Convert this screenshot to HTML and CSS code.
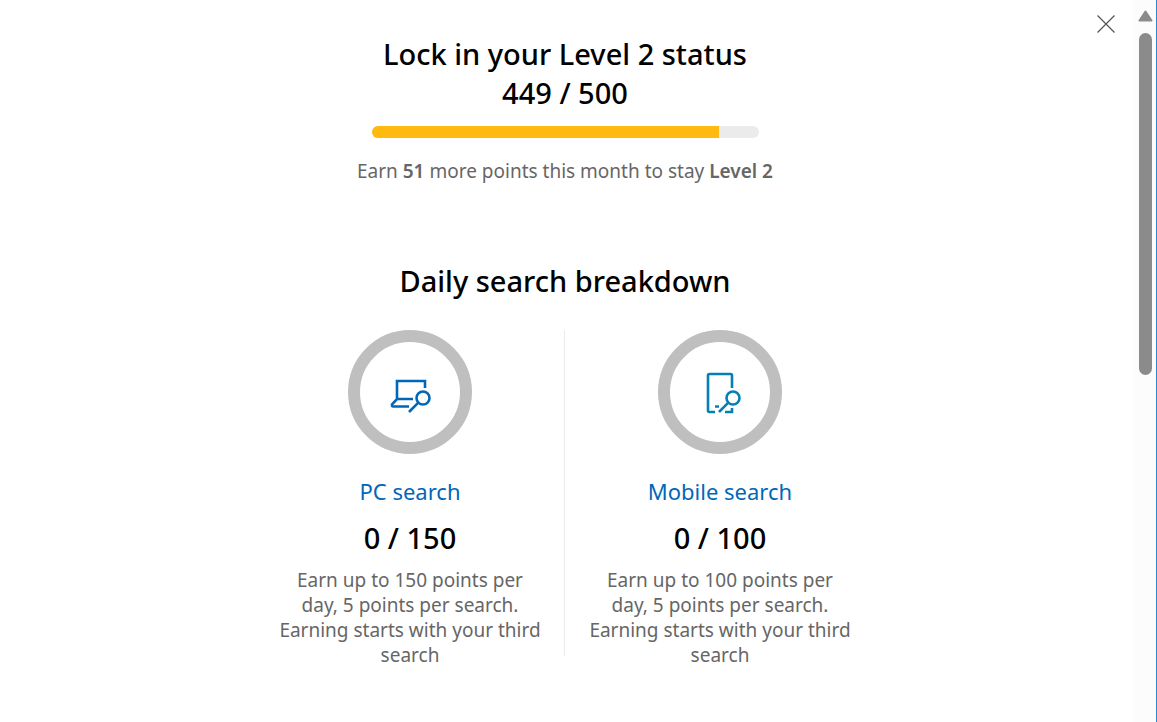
FILE: index.html
```html
<!DOCTYPE html>
<html lang="en">
<head>
  <meta charset="UTF-8">
  <meta name="viewport" content="width=device-width, initial-scale=1.0">
  <title>Points breakdown</title>
  <link rel="stylesheet" href="styles.css">
</head>
<body>
  <main class="dialog">
    <button class="close-btn" type="button" aria-label="Close">
      <svg width="18" height="18" viewBox="0 0 18 18" aria-hidden="true">
        <path d="M.5 .5l17 17M17.5 .5l-17 17"/>
      </svg>
    </button>

    <section class="level">
      <h1>Lock in your Level 2 status</h1>
      <p class="level-points">449 / 500</p>
      <div class="progress" role="progressbar" aria-label="Level 2 points" aria-valuenow="449" aria-valuemin="0" aria-valuemax="500">
        <div class="progress-fill" style="width: 89.8%"></div>
      </div>
      <p class="level-note">Earn <b>51</b> more points this month to stay <b>Level 2</b></p>
    </section>

    <section class="breakdown">
      <h2>Daily search breakdown</h2>
      <div class="cards">
        <div class="card">
          <div class="ring">
            <svg class="icon-pc" width="48" height="48" viewBox="0 0 48 48" aria-hidden="true">
              <path d="M39 20v-7H11v18M27 31H11l-4.500 4.800c-1.200 1.400-.5 2.700 1 2.700H23"/>
              <circle cx="37" cy="30" r="6.500"/>
              <path d="M32.300 34.700L23 44"/>
            </svg>
          </div>
          <a href="#">PC search</a>
          <p class="points">0 / 150</p>
          <p class="details">Earn up to 150 points per day, 5 points per search. Earning starts with your third search</p>
        </div>
        <div class="card">
          <div class="ring">
            <svg class="icon-mobile" width="48" height="48" viewBox="0 0 48 48" aria-hidden="true">
              <path d="M36 20V7.500Q36 6 34.500 6h-21Q12 6 12 7.500v35Q12 44 13.500 44H19M29 44h7v-4M19 38.500h4"/>
              <circle cx="37" cy="30" r="6.500"/>
              <path d="M32.300 34.700L23 44"/>
            </svg>
          </div>
          <a href="#">Mobile search</a>
          <p class="points">0 / 100</p>
          <p class="details">Earn up to 100 points per day, 5 points per search. Earning starts with your third search</p>
        </div>
      </div>
    </section>
  </main>

  <div class="scrollbar" aria-hidden="true">
    <svg width="15" height="12" viewBox="0 0 15 12">
      <path d="M7.500 1.500L13.500 10.500H1.500z"/>
    </svg>
    <div class="scroll-thumb"></div>
  </div>
</body>
</html>
```
FILE: styles.css
```css
* { margin: 0; padding: 0; box-sizing: border-box; }
body {
  display: flex;
  height: 100vh;
  overflow: hidden;
  font-family: 'Segoe UI', 'Noto Sans', sans-serif;
  background: #fff;
  color: #000;
  border-right: 1px solid #2b88d8;
}
.dialog {
  position: relative;
  flex: 1;
  padding: 34px 4px 0 0;
  text-align: center;
}
.close-btn {
  position: absolute;
  top: 8px;
  right: 12px;
  width: 32px;
  height: 32px;
  display: flex;
  align-items: center;
  justify-content: center;
  border: none;
  background: none;
  cursor: pointer;
}
.close-btn svg {
  stroke: #555;
  stroke-width: 1.2;
}
h1, h2, .level-points, .points {
  font-size: 29px;
  line-height: 39px;
  font-weight: 500;
}
.progress {
  width: 387px;
  height: 12px;
  margin: 14px auto 21px;
  border-radius: 6px;
  background: #ebebeb;
  overflow: hidden;
}
.progress-fill {
  height: 100%;
  background: #ffb90f;
}
.level-note, .details {
  font-size: 19px;
  line-height: 25px;
  color: #666;
}
.level-note b {
  font-weight: 600;
}
.breakdown {
  margin-top: 77px;
}
.cards {
  display: flex;
  justify-content: center;
  margin-top: 30px;
}
.card {
  position: relative;
  width: 310px;
  padding: 0 22px;
}
.card:first-child::after {
  content: '';
  position: absolute;
  top: 0;
  right: 0;
  bottom: 12px;
  width: 1px;
  background: #ebebeb;
}
.ring {
  display: flex;
  align-items: center;
  justify-content: center;
  width: 124px;
  height: 124px;
  margin: 0 auto 21px;
  border: 12px solid #bfbfbf;
  border-radius: 50%;
}
.ring svg {
  fill: none;
  stroke-width: 2.6;
}
.icon-pc {
  stroke: #0067b8;
}
.icon-mobile {
  stroke: #0480b5;
}
.card a {
  display: block;
  font-size: 22px;
  line-height: 32px;
  color: #0067b8;
  text-decoration: none;
}
.points {
  margin: 11px 0;
}
.scrollbar {
  display: flex;
  flex-direction: column;
  align-items: center;
  width: 22px;
  padding-top: 10px;
  background: #fcfcfc;
}
.scrollbar svg {
  fill: #8b8b8b;
  stroke: #8b8b8b;
  stroke-width: 2;
  stroke-linejoin: round;
}
.scroll-thumb {
  width: 13px;
  height: 48%;
  margin-top: 11px;
  border-radius: 7px;
  background: #8b8b8b;
}
```
